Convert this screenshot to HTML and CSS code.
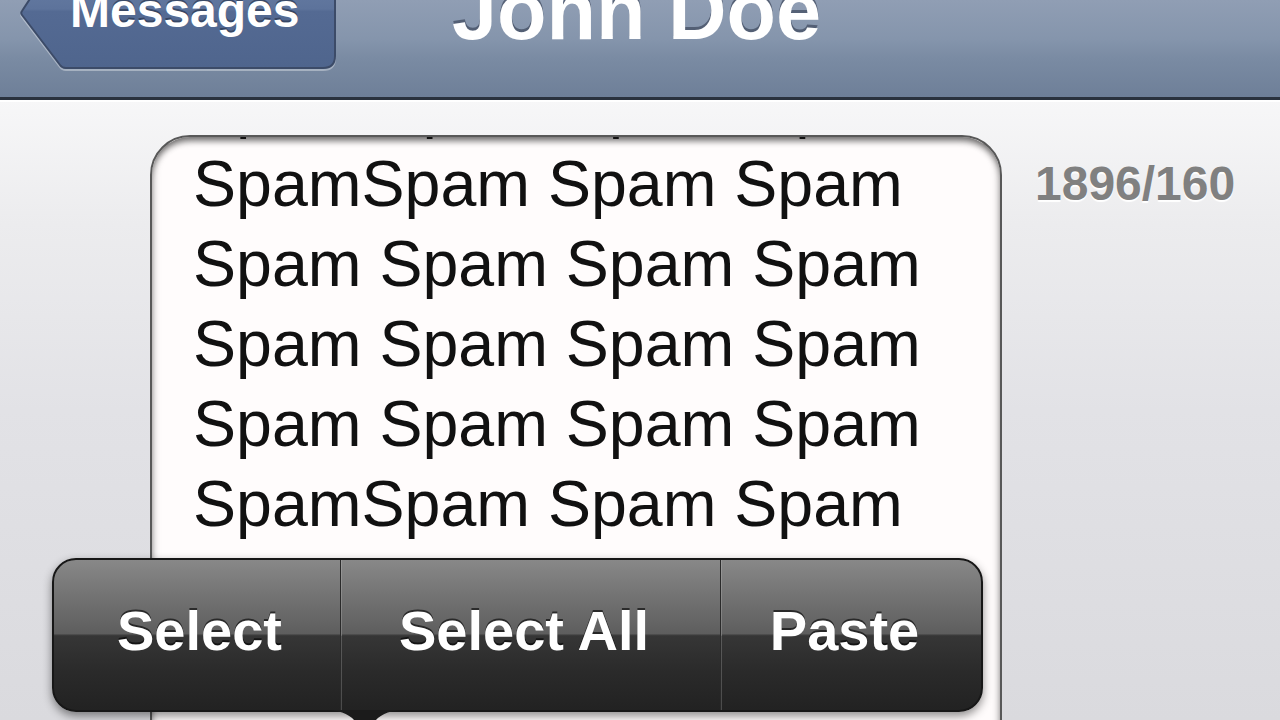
FILE: index.html
```html
<!DOCTYPE html>
<html>
<head>
<meta charset="utf-8">
<link rel="stylesheet" href="styles.css">
</head>
<body>
<div class="screen">
  <header class="nav">
    <div class="back">
      <svg class="back-shape" width="318" height="122" viewBox="0 0 318 122">
        <defs>
          <linearGradient id="bg" x1="0" y1="0" x2="0" y2="1">
            <stop offset="0" stop-color="#7086ab"/>
            <stop offset="0.5" stop-color="#5d739b"/>
            <stop offset="0.52" stop-color="#546a93"/>
            <stop offset="1" stop-color="#4f658d"/>
          </linearGradient>
        </defs>
        <path d="M3 62 L41 4 Q43 1 47 1 H304 Q316 1 316 13 V107 Q316 119 304 119 H47 Q43 119 41 116 L3 66 Q1.5 64 3 62 Z" fill="none" stroke="rgba(255,255,255,0.35)" stroke-width="2" transform="translate(0,2)"/>
        <path d="M3 62 L41 4 Q43 1 47 1 H304 Q316 1 316 13 V107 Q316 119 304 119 H47 Q43 119 41 116 L3 66 Q1.5 64 3 62 Z" fill="url(#bg)" stroke="#3c4b68" stroke-width="2"/>
      </svg>
      <span class="back-label">Messages</span>
    </div>
    <h1 class="title">John Doe</h1>
  </header>
  <main class="content">
    <div class="field">
      <div class="field-text">
        <div class="line">Spam Spam Spam Spam</div>
        <div class="line">SpamSpam Spam Spam</div>
        <div class="line">Spam Spam Spam Spam</div>
        <div class="line">Spam Spam Spam Spam</div>
        <div class="line">Spam Spam Spam Spam</div>
        <div class="line">SpamSpam Spam Spam</div>
        <div class="line">Spam Spam Spam Spam</div>
        <div class="line">Spam Spam Spam Spam</div>
        <div class="line">Spam Spam Spam Spam</div>
      </div>
    </div>
    <div class="counter">1896/160</div>
  </main>
  <div class="menu">
    <div class="seg seg-select">Select</div>
    <div class="divider"></div>
    <div class="seg seg-all">Select All</div>
    <div class="divider"></div>
    <div class="seg seg-paste">Paste</div>
    <svg class="menu-arrow" width="80" height="24" viewBox="0 0 80 24">
      <path d="M0 0 Q20 0 29 10 L40 23 L51 10 Q60 0 80 0 Z" fill="#1b1b1b"/>
    </svg>
  </div>
</div>
</body>
</html>
```
FILE: styles.css
```css
html, body {
  margin: 0;
  padding: 0;
  background: #dcdce0;
}

.screen {
  position: relative;
  width: 1280px;
  height: 720px;
  overflow: hidden;
  font-family: "Liberation Sans", Arial, Helvetica, sans-serif;
  background: #dcdce0;
}

.nav {
  height: 97px;
  border-bottom: 3px solid #2a323e;
  background: linear-gradient(#909eb4 0%, #8595ac 40%, #7a8ba3 60%, #6e7f98 100%);
  display: flex;
  align-items: flex-start;
}

.back {
  position: relative;
  width: 318px;
  height: 122px;
  margin-top: -51px;
  margin-left: 19px;
  flex: none;
}

.back-shape {
  position: absolute;
  left: 0;
  top: 0;
}

.back-label {
  position: relative;
  display: block;
  padding-top: 38px;
  padding-left: 51px;
  font-size: 48px;
  line-height: 48px;
  font-weight: bold;
  color: #fff;
  text-shadow: 0 -2px 0 rgba(30, 40, 60, 0.55);
}

.title {
  margin: -29px 0 0 115px;
  font-size: 81px;
  line-height: 80px;
  font-weight: bold;
  color: #fff;
  text-shadow: 0 -3px 0 rgba(40, 50, 70, 0.55);
  white-space: nowrap;
}

.content {
  height: 620px;
  background: linear-gradient(#f7f7f8 0%, #ececee 20%, #e2e2e6 50%, #dadade 100%);
  box-shadow: inset 0 2px 0 #ffffff;
  display: flex;
  align-items: flex-start;
  padding: 35px 0 0 150px;
  box-sizing: border-box;
}

.field {
  width: 852px;
  height: 660px;
  flex: none;
  box-sizing: border-box;
  border: 2px solid #585858;
  border-radius: 40px;
  background: #fffcfc;
  box-shadow: inset 0 6px 6px -2px rgba(0, 0, 0, 0.45), inset 0 0 9px rgba(0, 0, 0, 0.35);
  overflow: hidden;
}

.field-text {
  margin-top: -73px;
  padding-left: 41px;
  font-size: 64.5px;
  line-height: 80px;
  color: #111;
}

.line {
  white-space: pre;
}

.counter {
  margin-left: 33px;
  margin-top: 21px;
  font-size: 48px;
  font-weight: bold;
  color: #808080;
  text-shadow: 0 2px 1px #ffffff;
  white-space: nowrap;
}

.menu {
  position: absolute;
  left: 52px;
  top: 558px;
  width: 931px;
  height: 154px;
  box-sizing: border-box;
  border: 2px solid #171717;
  border-radius: 24px;
  background: linear-gradient(#888 0%, #727272 25%, #5e5e5e 49%, #363636 50.5%, #2a2a2a 75%, #222 100%);
  box-shadow: 0 4px 10px rgba(0, 0, 0, 0.45);
  display: flex;
  align-items: stretch;
}

.seg {
  display: flex;
  align-items: center;
  justify-content: center;
  padding-bottom: 8px;
  box-sizing: border-box;
  font-size: 56px;
  line-height: 56px;
  font-weight: bold;
  color: #fff;
  text-shadow: 0 -2px 0 rgba(0, 0, 0, 0.6);
  white-space: nowrap;
}

.seg-select { width: 286px; padding-left: 5px; }
.seg-all { width: 378px; padding-right: 14px; }
.seg-paste { width: 259px; padding-right: 14px; }

.divider {
  width: 2px;
  flex: none;
  box-sizing: border-box;
  border-left: 1px solid #2a2a2a;
  background: linear-gradient(#9a9a9a, #7a7a7a 50%, #5a5a5a 51%, #4a4a4a);
}

.menu-arrow {
  position: absolute;
  left: 271px;
  top: 150px;
}
```
